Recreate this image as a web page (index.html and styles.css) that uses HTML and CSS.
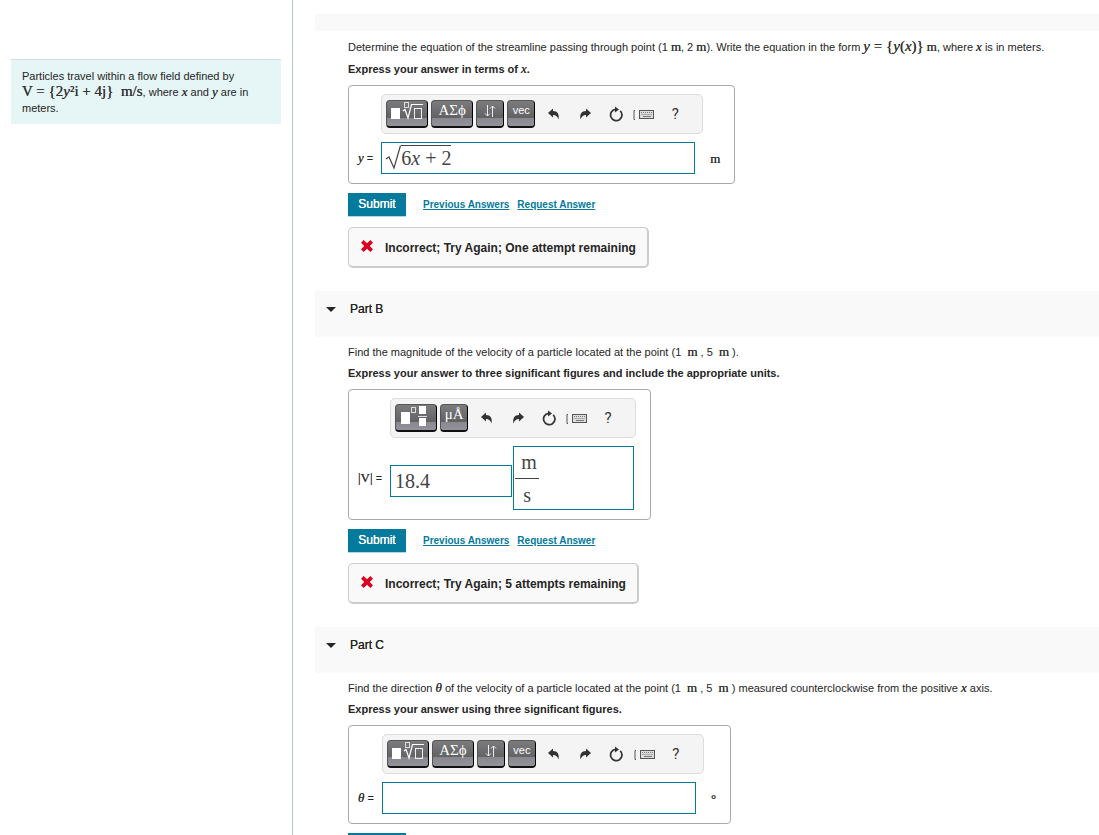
FILE: index.html
```html
<!DOCTYPE html>
<html lang="en">

<head>
  <title>Streamlines and Velocity</title>
  <meta charset="utf-8" />
  <meta name="viewport" content="width=device-width, initial-scale=1" />
  <link rel="stylesheet" href="styles.css">
</head>

<body>
  <!-- shared icons -->
  <svg class="sprite" aria-hidden="true">
    <symbol id="undo" viewBox="0 0 12 12">
      <path d="M0 5L5 0.500V3C9.500 3 11.500 6 10.500 11.500C9.500 8.500 8 7 5 7V9.500Z" fill="#333" />
    </symbol>
    <symbol id="redo" viewBox="0 0 12 12">
      <path d="M12 5L7 0.500V3C2.500 3 0.500 6 1.500 11.500C2.500 8.500 4 7 7 7V9.500Z" fill="#333" />
    </symbol>
    <symbol id="reset" viewBox="0 0 14 16">
      <path d="M11.200 4.800A5.700 5.700 0 1 1 6.500 3.300" fill="none" stroke="#333" stroke-width="1.700" />
      <path d="M6 0.500L10 3.500L6 6.500Z" fill="#333" />
    </symbol>
    <symbol id="keyboard" viewBox="0 0 22 12">
      <path d="M2 2.500H1V11.500H2" fill="none" stroke="#555" />
      <rect x="6.500" y="2.500" width="14" height="8" fill="#ddd" stroke="#555" />
      <path d="M8 4.500H19M8.500 6.500H19M17 8.500H19" stroke="#777" stroke-dasharray="1 1" />
      <path d="M10 8.500H17" stroke="#777" />
    </symbol>
    <symbol id="templates" viewBox="0 0 34 22">
      <rect x="1" y="7" width="9" height="11" fill="#fff" />
      <path d="M13 10L15 8.500L18 17L21.500 3.500H33" fill="none" stroke="#fff" stroke-width="1.200" />
      <rect x="14.500" y="1.500" width="4" height="5" fill="none" stroke="#ddd" />
      <rect x="24.500" y="7.500" width="7" height="10" fill="none" stroke="#eee" />
    </symbol>
    <symbol id="fractions" viewBox="0 0 34 22">
      <rect x="2" y="7" width="9" height="12" fill="#fff" />
      <rect x="12.500" y="2.500" width="4" height="5" fill="none" stroke="#ddd" />
      <rect x="20" y="1" width="7" height="8" fill="#fff" />
      <path d="M19 11.500H28" stroke="#ddd" />
      <rect x="20" y="13" width="7" height="8" fill="#fff" />
    </symbol>
    <symbol id="arrows" viewBox="0 0 12 14">
      <path d="M3.500 1V12M1 9.500L3.500 12L6 9.500M8.500 13V2M6 4.500L8.500 2L11 4.500" fill="none" stroke="#eee" />
    </symbol>
    <symbol id="cross" viewBox="0 0 12 12">
      <path d="M2 2L10 10M10 2L2 10" stroke="#db0020" stroke-width="3.200" />
    </symbol>
  </svg>

  <div class="layout">
    <aside class="sidebar">
      <div class="intro">
        Particles travel within a flow field defined by<br>
        <span class="math big">V = {2<i>y</i>²i + 4j}&nbsp; m/s</span>, where <i class="math">x</i> and <i class="math">y</i> are in meters.
      </div>
    </aside>

    <main class="content">
      <section>
        <div class="part-header short"></div>
        <div class="part-body">
          <p class="question tall">Determine the equation of the streamline passing through point (1 <span class="math">m</span>, 2 <span class="math">m</span>). Write the equation in the form <span class="math big"><i>y</i> = {<i>y</i>(<i>x</i>)}</span> <span class="math">m</span>, where <i class="math">x</i> is in meters.</p>
          <p class="instructions">Express your answer in terms of <i class="math">x</i>.</p>
          <div class="answer-box">
            <div class="toolbar">
              <button class="tool wide" aria-label="Templates"><svg class="icon-template"><use href="#templates" /></svg></button>
              <button class="tool wide greek">ΑΣϕ</button>
              <button class="tool" aria-label="Arrows"><svg class="icon-arrows"><use href="#arrows" /></svg></button>
              <button class="tool">vec</button>
              <div class="actions">
                <button class="action" aria-label="Undo"><svg class="icon-undo"><use href="#undo" /></svg></button>
                <button class="action" aria-label="Redo"><svg class="icon-undo"><use href="#redo" /></svg></button>
                <button class="action" aria-label="Reset"><svg class="icon-reset"><use href="#reset" /></svg></button>
                <button class="action keys" aria-label="Keyboard shortcuts"><svg class="icon-keys"><use href="#keyboard" /></svg></button>
                <button class="action help">?</button>
              </div>
            </div>
            <label class="field-label" for="answerA"><i class="math">y</i> =</label>
            <div class="field">
              <div class="root">
                <svg class="radical" viewBox="0 0 16 27"><path d="M1 16L4 14L9 25L15.500 2.500" fill="none" stroke="#444" stroke-width="1.200" /></svg>
                <span class="radicand">6<i>x</i> + 2</span>
              </div>
              <input class="field-input over" id="answerA" type="text">
            </div>
            <span class="unit math">m</span>
          </div>
          <div class="submit-row">
            <button class="submit">Submit</button>
            <a class="link" href="#">Previous Answers</a>
            <a class="link" href="#">Request Answer</a>
          </div>
          <div class="feedback"><svg class="icon-cross"><use href="#cross" /></svg>Incorrect; Try Again; One attempt remaining</div>
        </div>
      </section>

      <section>
        <div class="part-header"><span class="caret"></span>Part B</div>
        <div class="part-body">
          <p class="question">Find the magnitude of the velocity of a particle located at the point (1 &nbsp;<span class="math">m</span> , 5 &nbsp;<span class="math">m</span> ).</p>
          <p class="instructions">Express your answer to three significant figures and include the appropriate units.</p>
          <div class="answer-box">
            <div class="toolbar">
              <button class="tool wide" aria-label="Templates"><svg class="icon-template"><use href="#fractions" /></svg></button>
              <button class="tool greek">μÅ</button>
              <div class="actions">
                <button class="action" aria-label="Undo"><svg class="icon-undo"><use href="#undo" /></svg></button>
                <button class="action" aria-label="Redo"><svg class="icon-undo"><use href="#redo" /></svg></button>
                <button class="action" aria-label="Reset"><svg class="icon-reset"><use href="#reset" /></svg></button>
                <button class="action keys" aria-label="Keyboard shortcuts"><svg class="icon-keys"><use href="#keyboard" /></svg></button>
                <button class="action help">?</button>
              </div>
            </div>
            <label class="field-label" for="answerB"><span class="math">|V|</span> =</label>
            <div class="field-pair">
              <input class="field-input" id="answerB" type="text" value="18.4">
              <div class="field units">
                <div class="fraction"><span>m</span><span class="denominator">s</span></div>
                <input class="field-input over" type="text" aria-label="Units">
              </div>
            </div>
          </div>
          <div class="submit-row">
            <button class="submit">Submit</button>
            <a class="link" href="#">Previous Answers</a>
            <a class="link" href="#">Request Answer</a>
          </div>
          <div class="feedback"><svg class="icon-cross"><use href="#cross" /></svg>Incorrect; Try Again; 5 attempts remaining</div>
        </div>
      </section>

      <section>
        <div class="part-header"><span class="caret"></span>Part C</div>
        <div class="part-body">
          <p class="question">Find the direction <i class="math">θ</i> of the velocity of a particle located at the point (1 &nbsp;<span class="math">m</span> , 5 &nbsp;<span class="math">m</span> ) measured counterclockwise from the positive <i class="math">x</i> axis.</p>
          <p class="instructions">Express your answer using three significant figures.</p>
          <div class="answer-box">
            <div class="toolbar">
              <button class="tool wide" aria-label="Templates"><svg class="icon-template"><use href="#templates" /></svg></button>
              <button class="tool wide greek">ΑΣϕ</button>
              <button class="tool" aria-label="Arrows"><svg class="icon-arrows"><use href="#arrows" /></svg></button>
              <button class="tool">vec</button>
              <div class="actions">
                <button class="action" aria-label="Undo"><svg class="icon-undo"><use href="#undo" /></svg></button>
                <button class="action" aria-label="Redo"><svg class="icon-undo"><use href="#redo" /></svg></button>
                <button class="action" aria-label="Reset"><svg class="icon-reset"><use href="#reset" /></svg></button>
                <button class="action keys" aria-label="Keyboard shortcuts"><svg class="icon-keys"><use href="#keyboard" /></svg></button>
                <button class="action help">?</button>
              </div>
            </div>
            <label class="field-label" for="answerC"><i class="math">θ</i> =</label>
            <div class="field">
              <input class="field-input" id="answerC" type="text">
            </div>
            <span class="unit math">°</span>
          </div>
          <div class="submit-row">
            <button class="submit">Submit</button>
          </div>
        </div>
      </section>
    </main>
  </div>
</body>

</html>
```
FILE: styles.css
```css
* {
  box-sizing: border-box;
}

body {
  margin: 0;
  background: #fff;
  color: #252525;
  font-family: "Liberation Sans", Arial, sans-serif;
  font-size: 11px;
  line-height: 16px;
}

button,
input {
  margin: 0;
  padding: 0;
  font-family: inherit;
}

button {
  cursor: pointer;
}

.sprite {
  display: none;
}

.layout {
  display: flex;
  height: 100vh;
  overflow: hidden;
}

.sidebar {
  flex: none;
  width: 293px;
  padding: 59px 11px 0;
  border-right: 1px solid #b3c8d8;
}

.intro {
  padding: 8px 10px 8px 11px;
  border-top: 1px solid #d3e0de;
  background: #e6f6f6;
}

.math {
  color: #333;
  font-family: "Liberation Serif", "Times New Roman", serif;
  font-size: 13px;
  font-weight: normal;
  line-height: 1;
  text-shadow: 0 0 0 currentColor;
}

.math.big {
  font-size: 15px;
}

.content {
  flex: 1;
  min-width: 0;
  padding: 14px 0 0 22px;
}

.part-header {
  display: flex;
  align-items: center;
  height: 46px;
  padding: 0 11px 10px;
  background: #f9f9f9;
  font-size: 12px;
  text-shadow: 0 0 0 currentColor;
}

.part-header.short {
  height: 17px;
}

.caret {
  margin-right: 14px;
  border: 5px solid transparent;
  border-top-color: #252525;
  border-bottom: 0;
}

.part-body {
  display: flex;
  flex-direction: column;
  align-items: flex-start;
  padding: 7px 0 23px 33px;
}

.question,
.instructions {
  margin: 0;
}

.question {
  margin-bottom: 5px;
}

.question.tall {
  line-height: 18px;
}

.instructions {
  margin-bottom: 8px;
  font-weight: bold;
}

.answer-box {
  display: grid;
  grid-template-columns: auto auto auto;
  align-items: center;
  row-gap: 8px;
  padding: 8px 14px 9px 9px;
  border: 1px solid #aaa;
  border-radius: 4px;
}

.toolbar {
  display: flex;
  grid-column: 2 / 4;
  justify-self: start;
  gap: 3px;
  height: 40px;
  padding: 5px 9px 5px 4px;
  border: 1px solid #ddd;
  border-radius: 5px;
  background: #f4f4f4;
}

.tool {
  display: flex;
  justify-content: center;
  width: 28px;
  height: 28px;
  border: 1px solid #555;
  border-right-color: #000;
  border-bottom: 2px solid #111;
  border-radius: 4px;
  background: linear-gradient(#7c7c7e, #626264 66%, #88878f 66%, #94939b);
  color: #fff;
  font-size: 11px;
  line-height: 18px;
}

.tool.wide {
  width: 42px;
}

.tool.greek {
  font-family: "Liberation Serif", serif;
  font-size: 15px;
}

.icon-template {
  width: 34px;
  height: 22px;
}

.icon-arrows {
  width: 12px;
  height: 14px;
  margin-top: 3px;
}

.actions {
  display: flex;
}

.action {
  display: flex;
  align-items: center;
  justify-content: center;
  width: 31px;
  height: 28px;
  border: 0;
  background: none;
  color: #333;
}

.action.keys {
  width: 26px;
}

.action.help {
  width: 36px;
  font-family: Roboto, sans-serif;
  font-size: 15px;
}

.icon-undo {
  width: 12px;
  height: 12px;
}

.icon-reset {
  width: 14px;
  height: 16px;
}

.icon-keys {
  width: 22px;
  height: 12px;
}

.field-label {
  padding-right: 8px;
  white-space: nowrap;
}

.field {
  position: relative;
  width: 314px;
  height: 32px;
}

.field-input {
  display: block;
  width: 100%;
  height: 32px;
  padding: 0 4px;
  border: 1px solid #047a9c;
  outline: 0;
  background: none;
  color: #444;
  font-family: "Liberation Serif", serif;
  font-size: 20px;
}

.field-input.over {
  position: absolute;
  inset: 0;
  height: 100%;
}

.root {
  display: flex;
  padding: 3px 0 0 4px;
  color: #444;
  font-family: "Liberation Serif", serif;
  font-size: 20px;
  line-height: 24px;
}

.radical {
  width: 16px;
  height: 27px;
  margin-top: -2px;
}

.radicand {
  height: 24px;
  border-top: 1px solid #444;
}

.field-pair {
  display: flex;
  align-items: center;
  gap: 1px;
}

.field-pair .field-input {
  width: 122px;
  margin-top: 6px;
}

.field-pair .units,
.units .field-input {
  width: 121px;
  height: 64px;
  margin: 0;
}

.fraction {
  display: inline-flex;
  flex-direction: column;
  margin-left: 2px;
  color: #444;
  font-family: "Liberation Serif", serif;
  font-size: 20px;
  line-height: 32px;
  text-align: center;
}

.fraction span {
  width: 24px;
  padding-left: 4px;
}

.fraction .denominator {
  padding-left: 0;
  border-top: 1px solid #444;
}

.unit {
  padding-left: 15px;
}

.submit-row {
  display: flex;
  align-items: center;
  margin: 9px 0 11px;
}

.submit {
  width: 58px;
  height: 23px;
  margin-right: 17px;
  padding-bottom: 2px;
  border: 0;
  background: #047a9c;
  box-shadow: 0 1px 0 #b5d5df;
  color: #fff;
  font-size: 12px;
  text-shadow: 0 0 0 currentColor;
}

.link {
  margin-right: 8px;
  color: #047a9c;
  font-size: 10px;
  font-weight: bold;
}

.feedback {
  display: flex;
  align-items: center;
  height: 41px;
  padding: 1px 11px 0;
  border: 1px solid #ccc;
  border-right-width: 2px;
  border-bottom-width: 2px;
  border-radius: 5px;
  background: #f9f9f9;
  font-size: 12px;
  font-weight: bold;
}

.icon-cross {
  width: 14px;
  height: 14px;
  margin: 0 11px 3px 0;
}
```
